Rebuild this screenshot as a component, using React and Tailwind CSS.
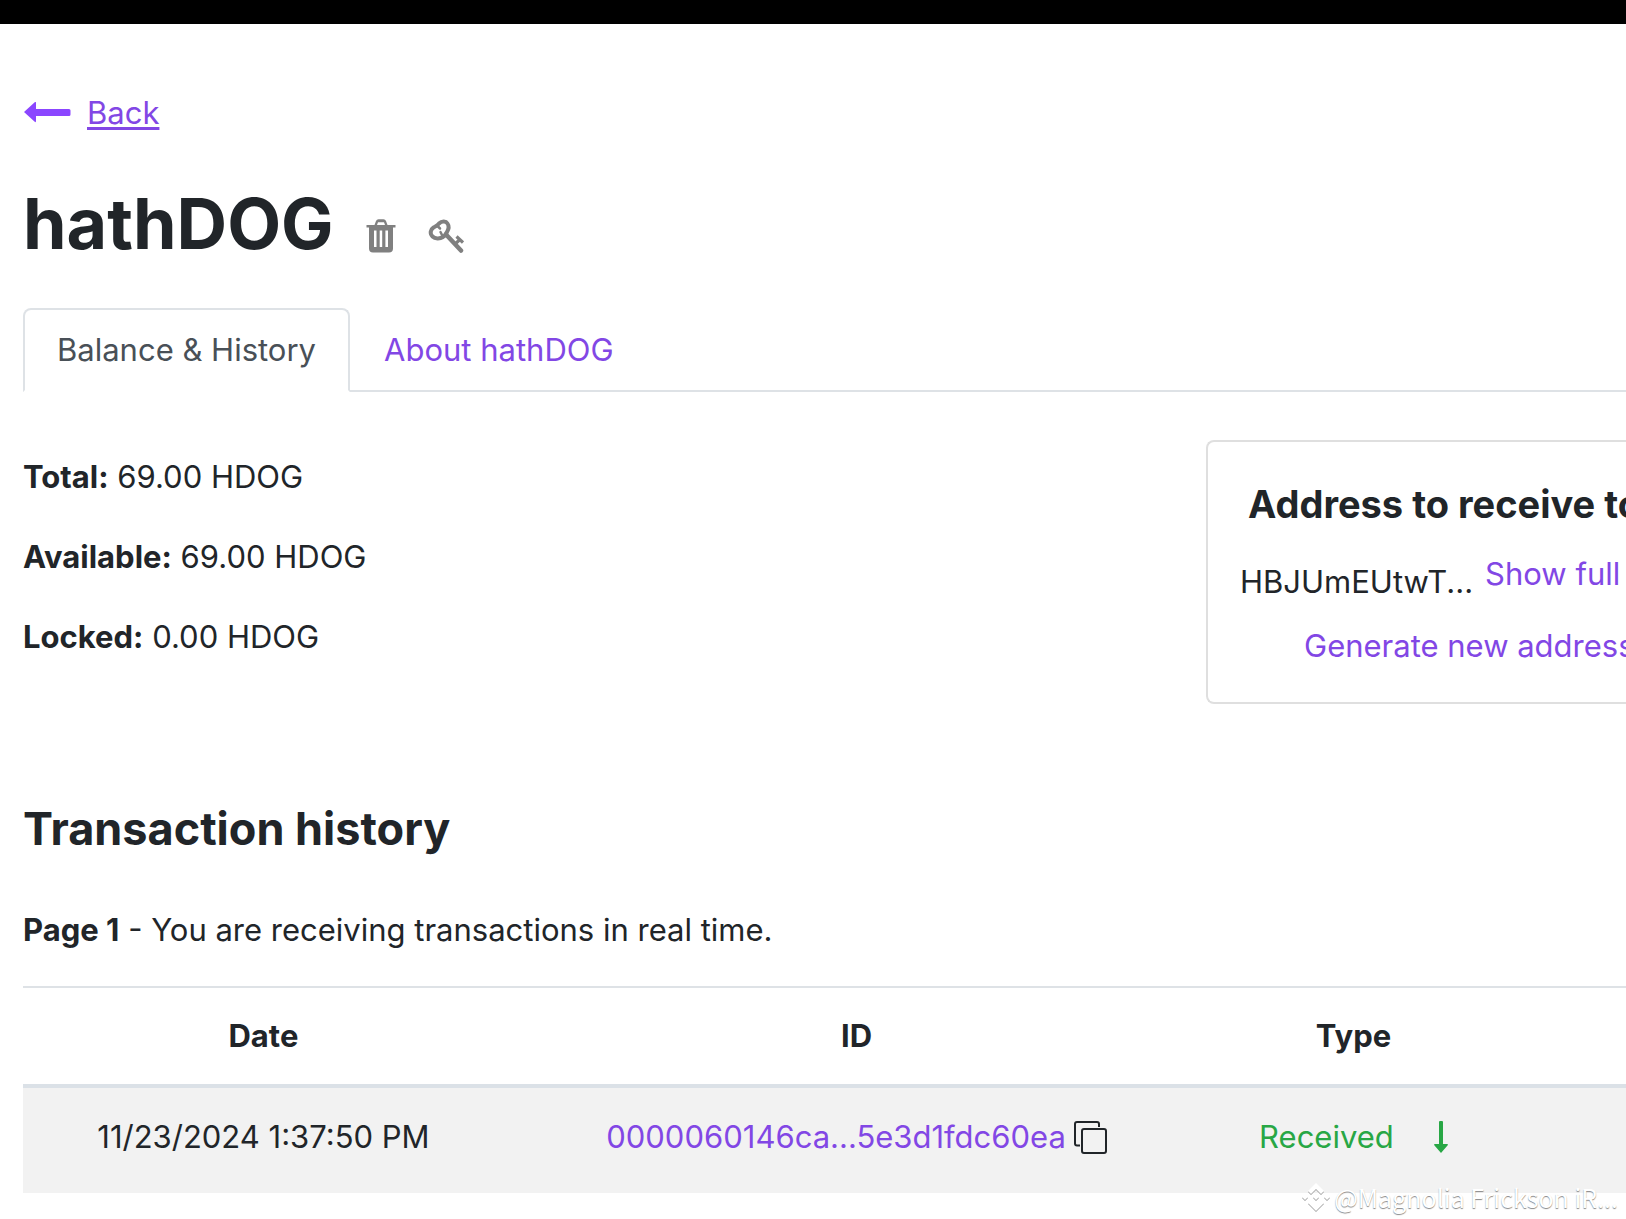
import { useState } from 'react'

const BALANCES = [
  { label: 'Total:', value: '69.00 HDOG' },
  { label: 'Available:', value: '69.00 HDOG' },
  { label: 'Locked:', value: '0.00 HDOG' },
]

const TRANSACTIONS = [
  { date: '11/23/2024 1:37:50 PM', id: '0000060146ca...5e3d1fdc60ea', type: 'Received' },
]

export default function App() {
  const [tab, setTab] = useState('balance')

  return (
    <div className="relative overflow-hidden bg-white font-['Inter',sans-serif] text-[31px] leading-[48px] text-[#212529]">
      <div className="h-6 bg-black" />

      <main className="pl-[23px] pt-[65px] pb-6">
        <a href="#" className="inline-flex items-center gap-4 text-[#8247e5]">
          <BackArrow />
          <span className="underline decoration-[3px] underline-offset-[3px]">Back</span>
        </a>

        <div className="mt-11 flex items-end">
          <h1 className="text-[70px] leading-[86px] font-bold">hathDOG</h1>
          <button type="button" aria-label="Unregister token" className="mb-3 ml-8 text-[#808080]">
            <TrashIcon />
          </button>
          <button type="button" aria-label="Authority key" className="mb-3 ml-8 text-[#808080]">
            <KeyIcon />
          </button>
        </div>

        <div role="tablist" className="mt-[41px] flex border-b-2 border-[#dee2e6]">
          <Tab active={tab === 'balance'} onClick={() => setTab('balance')}>
            Balance &amp; History
          </Tab>
          <Tab active={tab === 'about'} onClick={() => setTab('about')}>
            About hathDOG
          </Tab>
        </div>

        <div className="mt-12 flex items-start justify-between">
          <div className="flex flex-col gap-8 pt-[13px]">
            {BALANCES.map((b) => (
              <p key={b.label}>
                <strong className="font-bold">{b.label}</strong> {b.value}
              </p>
            ))}
          </div>
          <AddressCard />
        </div>

        <h2 className="mt-24 text-[45px] leading-[58px] font-bold">Transaction history</h2>
        <p className="mt-12">
          <strong className="font-bold">Page 1</strong> - You are receiving transactions in real time.
        </p>

        <table className="mt-8 w-full table-fixed text-center">
          <thead>
            <tr className="border-t-2 border-b-4 border-t-[#dee2e6] border-b-[#dbe1e7]">
              <th className="w-[30%] py-6 font-bold">Date</th>
              <th className="w-[44%] py-6 font-bold">ID</th>
              <th className="w-[18%] py-6 font-bold">Type</th>
              <td />
            </tr>
          </thead>
          <tbody>
            {TRANSACTIONS.map((tx) => (
              <tr key={tx.id} className="bg-[#f2f2f2]">
                <td className="pt-[25px] pb-8">{tx.date}</td>
                <td className="pt-[25px] pb-8">
                  <div className="flex items-center justify-center gap-2">
                    <a href="#" className="text-[#8247e5]">{tx.id}</a>
                    <button type="button" aria-label="Copy ID">
                      <CopyIcon />
                    </button>
                  </div>
                </td>
                <td className="pt-[25px] pb-8 text-[#28a745]">
                  <div className="flex items-center justify-center gap-10">
                    {tx.type}
                    <DownArrow />
                  </div>
                </td>
                <td />
              </tr>
            ))}
          </tbody>
        </table>
      </main>

      <Watermark />
    </div>
  )
}

function Tab({ active, onClick, children }) {
  return (
    <button
      type="button"
      role="tab"
      aria-selected={active}
      onClick={onClick}
      className={[
        '-mb-[2px] rounded-t-lg border-2 px-8 py-4',
        active
          ? 'border-[#dee2e6] border-b-white bg-white text-[#495057]'
          : 'border-transparent text-[#8247e5]',
      ].join(' ')}
    >
      {children}
    </button>
  )
}

function AddressCard() {
  return (
    <section className="w-[420px] shrink-0 overflow-hidden rounded-l-lg border-2 border-r-0 border-[#dfdfdf] py-8 pl-8 whitespace-nowrap">
      <h3 className="pl-2 text-[38px] leading-[60px] font-bold">Address to receive tokens</h3>
      <div className="mt-4 flex items-start gap-3">
        <span className="pt-2">HBJUmEUtwT...</span>
        <a href="#" className="text-[#8247e5]">Show full</a>
      </div>
      <a href="#" className="mt-4 block pl-16 text-[#8247e5]">Generate new address</a>
    </section>
  )
}

function BackArrow() {
  return (
    <svg width="48" height="22" viewBox="-1 0 48 22" fill="#8b46ff">
      <path d="M0 10 11 0q1-.6 1 1v6h33q1.500 0 1.500 1.500v4q0 1.500-1.500 1.500H12v5q0 1.600-1 1z" />
    </svg>
  )
}

function DownArrow() {
  return (
    <svg width="14" height="32" viewBox="0 0 14 32" fill="currentColor">
      <path d="M5 1q0-1 1-1h2q1 0 1 1v22h4q1.500 0 .7 1.200L7 32 .3 24.200Q-.5 23 1 23h4z" />
    </svg>
  )
}

function TrashIcon() {
  return (
    <svg width="30" height="36" viewBox="0 0 30 36" fill="currentColor">
      <path d="M8.500 6 10 2Q10.700.3 12.500.3h5Q19.300.3 20 2l1.500 4h8v2.500H.5V6zM11 6h8l-1-2.700h-6z" fillRule="evenodd" />
      <path d="M3 8h24v21.500Q27 33.500 23 33.500H7Q3 33.500 3 29.500zm5 3.500v16.500h2.500V11.500zm5.700 0v16.500h2.500V11.500zm5.700 0v16.500H22V11.500z" fillRule="evenodd" />
    </svg>
  )
}

function KeyIcon() {
  return (
    <svg width="36" height="36" viewBox="0 0 36 36" fill="none" stroke="currentColor">
      <path d="M11 4.500C14 1.500 18 2 19.500 4.500c2 3 1 6-.5 8.500-1 2-2 4-4 5-3 2-8 2-10.500-.5-3-3-2-7 1-9C7 7.300 9.500 7 11 4.500z" strokeWidth="4" />
      <path d="M9.500 7 12 9.500M14 16l-1.500-3" strokeWidth="2.500" strokeLinecap="round" />
      <path d="M18 15.500 33 31.500" strokeWidth="4.500" strokeLinecap="round" />
      <path d="M26.500 25.500 32 20.500M28.500 17.500l6.500 6" strokeWidth="3.200" />
    </svg>
  )
}

function CopyIcon() {
  return (
    <svg width="33" height="33" viewBox="0 0 33 33" fill="none" stroke="currentColor" strokeWidth="2">
      <path d="M6 24.500H3Q1 24.500 1 22.500V3q0-2 2-2h20q2 0 2 2v3" />
      <rect x="8" y="8" width="24" height="24" rx="2" />
    </svg>
  )
}

function Watermark() {
  return (
    <div className="absolute right-2 bottom-0 flex items-center gap-1 font-['Noto_Sans_CJK_SC',sans-serif] text-[25px] leading-[40px] text-white [text-shadow:0_1px_1px_#888]">
      <svg width="28" height="30" viewBox="0 0 28 30" fill="#fff" className="drop-shadow-[0_1px_0_#999]">
        <path d="m14 1 8 8-3 3-5-5-5 5-3-3zM3 12l3 3-3 3-3-3zm11 0 3 3-3 3-3-3zm11 0 3 3-3 3-3-3zM6 21l3-3 5 5 5-5 3 3-8 8z" />
      </svg>
      @Magnolia Frickson iR...
    </div>
  )
}
